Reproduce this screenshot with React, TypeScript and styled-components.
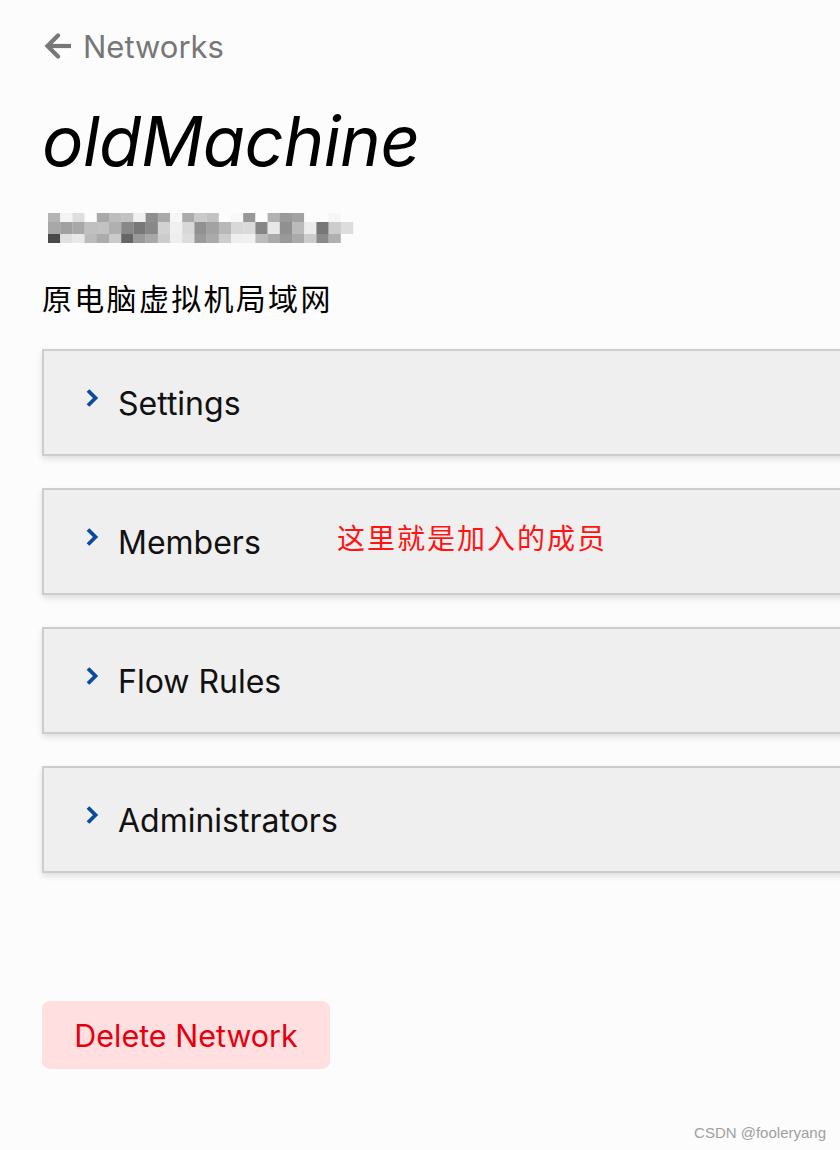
import React from "react";
import styled, { createGlobalStyle } from "styled-components";

const GlobalStyle = createGlobalStyle`
	html, body {
		margin: 0;
		padding: 0;
		background: #fcfcfc;
		overflow: hidden;
	}
	body {
		font-family: Inter, "Noto Sans", "Noto Sans CJK SC", sans-serif;
		color: #000;
	}
`;

const Page = styled.div`
	position: relative;
	width: 840px;
	height: 1150px;
	padding: 26px 0 0 42px;
	box-sizing: border-box;
	overflow: hidden;
`;

const BackLink = styled.div`
	display: flex;
	align-items: center;
	gap: 11px;
	height: 40px;
	padding-left: 2px;
	font-size: 31px;
	color: #777;
	cursor: pointer;
`;

const Title = styled.h1`
	margin: 35px 0 0 0;
	font-size: 69px;
	font-weight: 400;
	font-style: italic;
	line-height: 80px;
	letter-spacing: -0.5px;
`;

const Mosaic = styled.svg`
	display: block;
	margin: 32px 0 0 6px;
`;

const Description = styled.div`
	margin-top: 32px;
	font-family: "Noto Sans CJK SC", sans-serif;
	font-size: 30px;
	line-height: 40px;
	letter-spacing: 2.3px;
`;

const Panels = styled.div`
	display: flex;
	flex-direction: column;
	gap: 32px;
	margin-top: 32px;
	margin-right: -60px;
`;

const Panel = styled.div`
	position: relative;
	display: flex;
	align-items: center;
	gap: 17px;
	height: 107px;
	box-sizing: border-box;
	padding: 0 0 0 41px;
	background: #efefef;
	border: 2px solid #cdcdcd;
	box-shadow: 0 3px 6px rgba(0, 0, 0, 0.12);
	cursor: pointer;
`;

const PanelTitle = styled.span`
	font-size: 32px;
	color: #111;
	padding-top: 2px;
`;

const Note = styled.span`
	position: absolute;
	left: 293px;
	top: 27px;
	font-family: "Noto Sans CJK SC", sans-serif;
	font-size: 28px;
	color: #ff1414;
	letter-spacing: 2px;
`;

const DeleteButton = styled.button`
	margin-top: 128px;
	width: 288px;
	height: 68px;
	border: none;
	border-radius: 8px;
	background: #ffdfe0;
	color: #e6000f;
	font-family: Inter, "Noto Sans", sans-serif;
	font-size: 30.5px;
	padding: 0;
	cursor: pointer;
`;

const Watermark = styled.span`
	position: absolute;
	right: 14px;
	bottom: 9px;
	font-family: "Liberation Sans", Arial, sans-serif;
	font-size: 15px;
	color: #a0a0a0;
`;

const BackArrow = () => (
	<svg width="28" height="26" viewBox="0 0 28 26">
		<path d="M27 13 H5" stroke="#777" strokeWidth="4.2" fill="none" />
		<path d="M14 2.5 L3.5 13 L14 23.5" stroke="#777" strokeWidth="4.2" fill="none" strokeLinecap="round" strokeLinejoin="miter" />
	</svg>
);

const Chevron = () => (
	<svg width="16" height="20" viewBox="0 0 16 20" style={{ marginTop: -9 }}>
		<path d="M3 2.5 L10.5 10 L3 17.5" stroke="#0a4a9f" strokeWidth="3.8" fill="none" />
	</svg>
);

const mosaicRows = [
	["#b4b4b4", "#f4f4f4", "#dedede", "#fcfcfc", "#a9a9a9", "#bcbcbc", "#c2c2c2", "#f0f0f0", "#8f8f8f", "#aaaaaa", "#f6f6f6", "#ababab", "#cacaca", "#c2c2c2", "#fcfcfc", "#f8f8f8", "#989898", "#fcfcfc", "#b2b2b2", "#9a9a9a", "#a2a2a2", "#fcfcfc", "#fcfcfc", "#f6f6f6", "#fcfcfc"],
	["#a8a8a8", "#a0a0a0", "#a8a8a8", "#c0c0c0", "#c2c2c2", "#b0b0b0", "#888888", "#787878", "#888888", "#d2d2d2", "#f0f0f0", "#d8d8d8", "#919191", "#a2a2a2", "#b8b8b8", "#d8d8d8", "#dadada", "#868686", "#e8e8e8", "#909090", "#bbbbbb", "#ececec", "#777777", "#cccccc", "#dddddd"],
	["#4a4a4a", "#e0e0e0", "#e8e8e8", "#bbbbbb", "#acacac", "#cacaca", "#666666", "#999999", "#a8a8a8", "#cccccc", "#eeeeee", "#dddddd", "#9a9a9a", "#aaaaaa", "#cccccc", "#eeeeee", "#f0f0f0", "#bbbbbb", "#aaaaaa", "#999999", "#aaaaaa", "#cccccc", "#8a8a8a", "#b0b0b0", "#fcfcfc"],
];
const rowHeights = [9, 12, 9];

const sections = ["Settings", "Members", "Flow Rules", "Administrators"];

export default function App() {
	let y = 0;
	return (
		<React.Fragment>
			<GlobalStyle />
			<Page>
				<BackLink>
					<BackArrow />
					Networks
				</BackLink>
				<Title>oldMachine</Title>
				<Mosaic width="310" height="32" viewBox="0 0 310 32">
					{mosaicRows.map((row, r) => {
						const top = y;
						y += rowHeights[r];
						return row.map((c, i) => (
							<rect key={`${r}-${i}`} x={i * 12.2} y={top} width="12.4" height={rowHeights[r]} fill={c} />
						));
					})}
				</Mosaic>
				<Description>原电脑虚拟机局域网</Description>
				<Panels>
					{sections.map((name) => (
						<Panel key={name}>
							<Chevron />
							<PanelTitle>{name}</PanelTitle>
							{name === "Members" && <Note>这里就是加入的成员</Note>}
						</Panel>
					))}
				</Panels>
				<DeleteButton>Delete Network</DeleteButton>
				<Watermark>CSDN @fooleryang</Watermark>
			</Page>
		</React.Fragment>
	);
}
